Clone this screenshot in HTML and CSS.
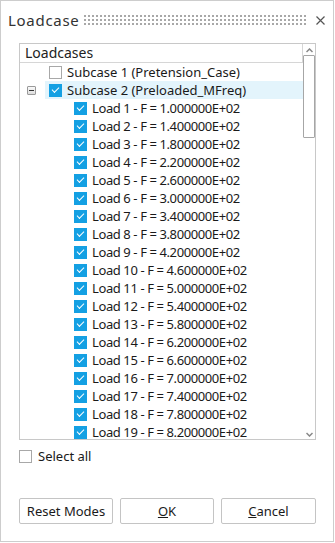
FILE: index.html
```html
<!DOCTYPE html>
<html>
<head>
<meta charset="utf-8">
<link rel="stylesheet" href="styles.css">
</head>
<body>
<div class="window">
  <div class="titlebar">
    <span class="title">Loadcase</span>
    <span class="grip"></span>
    <svg class="close" width="9" height="9" viewBox="0 0 9 9"><path d="M0.5 0.5L8.5 8.5M8.5 0.5L0.5 8.5" stroke="#555" stroke-width="1.2"/></svg>
  </div>
  <div class="listbox">
    <div class="listmain">
      <div class="header">Loadcases</div>
      <div class="rows">
        <div class="row sub">
          <span class="exp none"></span>
          <span class="cb"></span>
          <span class="txt">Subcase 1 (Pretension_Case)</span>
        </div>
        <div class="row sub sel">
          <span class="exp"><span class="minus"></span></span>
          <span class="cb on"></span>
          <span class="txt">Subcase 2 (Preloaded_MFreq)</span>
        </div>
        <div class="row load"><span class="cb on"></span><span class="txt">Load 1 - F = 1.000000E+02</span></div>
        <div class="row load"><span class="cb on"></span><span class="txt">Load 2 - F = 1.400000E+02</span></div>
        <div class="row load"><span class="cb on"></span><span class="txt">Load 3 - F = 1.800000E+02</span></div>
        <div class="row load"><span class="cb on"></span><span class="txt">Load 4 - F = 2.200000E+02</span></div>
        <div class="row load"><span class="cb on"></span><span class="txt">Load 5 - F = 2.600000E+02</span></div>
        <div class="row load"><span class="cb on"></span><span class="txt">Load 6 - F = 3.000000E+02</span></div>
        <div class="row load"><span class="cb on"></span><span class="txt">Load 7 - F = 3.400000E+02</span></div>
        <div class="row load"><span class="cb on"></span><span class="txt">Load 8 - F = 3.800000E+02</span></div>
        <div class="row load"><span class="cb on"></span><span class="txt">Load 9 - F = 4.200000E+02</span></div>
        <div class="row load"><span class="cb on"></span><span class="txt">Load 10 - F = 4.600000E+02</span></div>
        <div class="row load"><span class="cb on"></span><span class="txt">Load 11 - F = 5.000000E+02</span></div>
        <div class="row load"><span class="cb on"></span><span class="txt">Load 12 - F = 5.400000E+02</span></div>
        <div class="row load"><span class="cb on"></span><span class="txt">Load 13 - F = 5.800000E+02</span></div>
        <div class="row load"><span class="cb on"></span><span class="txt">Load 14 - F = 6.200000E+02</span></div>
        <div class="row load"><span class="cb on"></span><span class="txt">Load 15 - F = 6.600000E+02</span></div>
        <div class="row load"><span class="cb on"></span><span class="txt">Load 16 - F = 7.000000E+02</span></div>
        <div class="row load"><span class="cb on"></span><span class="txt">Load 17 - F = 7.400000E+02</span></div>
        <div class="row load"><span class="cb on"></span><span class="txt">Load 18 - F = 7.800000E+02</span></div>
        <div class="row load"><span class="cb on"></span><span class="txt">Load 19 - F = 8.200000E+02</span></div>
      </div>
    </div>
    <div class="scrollbar">
      <svg class="arrow" width="7" height="5" viewBox="0 0 7 5"><path d="M0.5 4L3.5 1L6.5 4" stroke="#888" stroke-width="1.5" fill="none"/></svg>
      <div class="thumb"></div>
      <div class="track"></div>
      <svg class="arrow" width="7" height="5" viewBox="0 0 7 5"><path d="M0.5 1L3.5 4L6.5 1" stroke="#888" stroke-width="1.5" fill="none"/></svg>
    </div>
  </div>
  <div class="selectall">
    <span class="cb"></span>
    <span class="txt">Select all</span>
  </div>
  <div class="spacer"></div>
  <div class="buttons">
    <button class="btn">Reset Modes</button>
    <button class="btn"><u>O</u>K</button>
    <button class="btn"><u>C</u>ancel</button>
  </div>
</div>
</body>
</html>
```

FILE: styles.css
```css
* { box-sizing: border-box; }
html, body { margin: 0; padding: 0; background: #fff; }
body {
  font-family: "Noto Sans", "Open Sans", sans-serif;
  font-size: 13px;
  color: #1a1a1a;
}
.window {
  width: 334px;
  height: 542px;
  border: 1px solid #cdcdcd;
  padding: 0 17px 17px 18px;
  display: flex;
  flex-direction: column;
}
.titlebar {
  height: 42px;
  display: flex;
  align-items: center;
  margin-left: -11px;
  margin-right: -9px;
  padding-bottom: 4px;
}
.title {
  font-size: 15px;
  letter-spacing: 0.7px;
  color: #333;
  width: 75px;
}
.grip {
  flex: 1;
  height: 12px;
  margin-right: 10px;
  background-image: radial-gradient(circle, #a8a8a8 0.9px, transparent 1.1px);
  background-size: 4px 4px;
  background-position: 0 0;
}
.close { display: block; }
.listbox {
  height: 397px;
  border: 1px solid #c8c8c8;
  display: flex;
}
.listmain {
  flex: 1;
  display: flex;
  flex-direction: column;
  overflow: hidden;
}
.header {
  height: 19px;
  border-bottom: 1px solid #d6d6d6;
  border-right: 1px solid #d6d6d6;
  padding-left: 5px;
  line-height: 18px;
  font-size: 14px;
  color: #222;
}
.rows { display: flex; flex-direction: column; }
.row {
  height: 18px;
  display: flex;
  align-items: center;
  white-space: nowrap;
}
.row .txt { line-height: 18px; margin-left: 5px; }
.load .txt { letter-spacing: -0.4px; }
.sub .exp {
  width: 9px;
  height: 9px;
  margin-left: 7px;
  margin-right: 9px;
  border: 1px solid #9a9a9a;
  border-radius: 1px;
  background: linear-gradient(#fafafa, #dcdcdc);
  display: flex;
  align-items: center;
  justify-content: center;
}
.sub .exp.none { border: none; background: none; }
.minus { width: 5px; height: 1px; background: #333; }
.sub .cb { margin-left: 4px; }
.row.sel {
  background: linear-gradient(to right, transparent 25px, #e3f4fc 25px);
}
.cb {
  width: 13px;
  height: 13px;
  border: 1px solid #a8a8a8;
  background: #fff;
  flex: none;
  position: relative;
}
.cb.on {
  border: none;
  background: #14a0e3;
}
.cb.on::after {
  content: "";
  position: absolute;
  left: 3px;
  top: 3px;
  width: 6px;
  height: 3px;
  border-left: 1.5px solid #fff;
  border-bottom: 1.5px solid #fff;
  transform: rotate(-45deg);
}
.load .cb { margin-left: 54px; }
.scrollbar {
  width: 12px;
  display: flex;
  flex-direction: column;
  align-items: center;
}
.scrollbar .arrow { margin: 4px 0 2px; }
.thumb {
  width: 12px;
  height: 83px;
  border: 1px solid #a6a6a6;
  border-radius: 1px;
  background: #fff;
}
.track { flex: 1; }
.selectall {
  margin-top: 9px;
  height: 14px;
  display: flex;
  align-items: center;
}
.selectall .txt { margin-left: 6px; }
.spacer { flex: 1; }
.buttons {
  display: flex;
  gap: 7px;
}
.btn {
  height: 26px;
  width: 95px;
  border: 1px solid #c4c4c4;
  border-radius: 2px;
  background: #fff;
  font-family: "Noto Sans", "Open Sans", sans-serif;
  font-size: 13px;
  color: #1a1a1a;
  padding: 0;
}
.btn:last-child { width: 96px; }
```
